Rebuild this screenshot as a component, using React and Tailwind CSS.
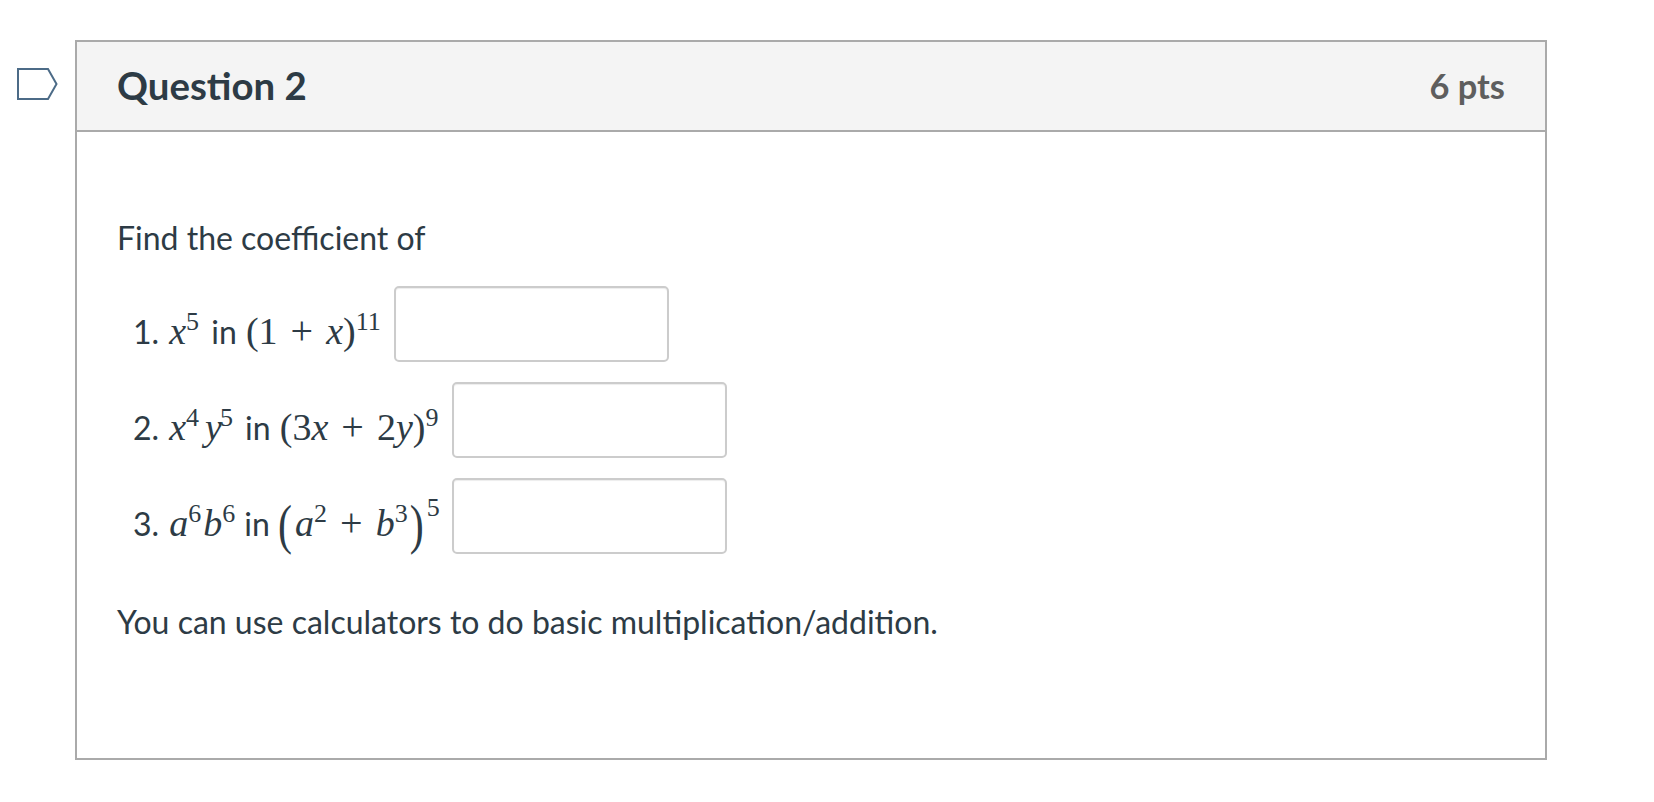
import React from 'react';

const Mi = ({ className = '', children }) => <i className={`font-['Liberation_Serif',serif] text-[38px] ${className}`}>{children}</i>;
const Mn = ({ children }) => <span className="font-['Liberation_Serif',serif] text-[38px]">{children}</span>;
const Plus = () => <span className="font-['Liberation_Serif',serif] text-[40px] leading-none mx-[13px]">+</span>;
const Sup = ({ className = '', children }) => (
    <sup className={`font-['Liberation_Serif',serif] text-[26px] leading-none align-[14px] top-0 ${className}`}>{children}</sup>
);
const Paren = ({ className = '', children }) => (
    <span className={`inline-block font-['Liberation_Serif',serif] text-[42px] leading-none align-[-3px] scale-y-[1.3] ${className}`}>{children}</span>
);

const AnswerBox = () => (
    <input
        type="text"
        className="w-[275px] h-[76px] ml-[14px] rounded-[5px] border-2 border-[#cccccc] bg-white shadow-[inset_0_1px_1px_rgba(0,0,0,0.075)]"
    />
);

const Row = ({ num, textClass = 'pt-[12px]', children }) => (
    <li className="flex items-center h-[76px] mb-[20px]">
        <span className={`ml-[16px] whitespace-nowrap ${textClass}`}>
            <span className="mr-[10px]">{num}</span>
            {children}
        </span>
        <AnswerBox />
    </li>
);

export default function App() {
    return (
        <div className="min-h-[802px] bg-white font-['Lato',sans-serif] text-[#2d3b45] flex items-start pt-[40px] pl-[17px]">
            {/* Flag marker */}
            <svg width="41" height="32" viewBox="0 0 41 32" className="mt-[28px] mr-[17px] shrink-0">
                <path d="M1 1 H31 L39.5 16 L31 31 H1 Z" fill="#ffffff" stroke="#4c6b87" strokeWidth="2" />
            </svg>

            <div className="w-[1472px] h-[720px] border-2 border-[#aaaaaa]">
                <div className="h-[90px] bg-[#f4f4f4] border-b-2 border-[#aaaaaa] flex items-center justify-between pl-[40px] pr-[40px]">
                    <h2 className="text-[38.4px] font-bold leading-none -translate-y-[1px]">Question 2</h2>
                    <div className="text-[34.4px] font-bold leading-none text-[#5e5e5e]">6 pts</div>
                </div>

                <div className="pl-[40px] pt-[86px] text-[32px] leading-[40px]">
                    <p>Find the coefficient of</p>
                    <ol className="mt-[28px]">
                        <Row num="1.">
                            <Mi>x</Mi><Sup>5</Sup> <span className="ml-[4px] mr-[1px]">in</span> <Mn>(1</Mn><Plus /><Mi>x</Mi><Mn>)</Mn><Sup className="-mr-[1px]">11</Sup>
                        </Row>
                        <Row num="2.">
                            <Mi>x</Mi><Sup>4</Sup><Mi className="ml-[6px]">y</Mi><Sup className="-ml-[2px]">5</Sup> <span className="ml-[4px] mr-[1px]">in</span> <Mn>(3</Mn><Mi>x</Mi><Plus /><Mn>2</Mn><Mi>y</Mi><Mn>)</Mn><Sup>9</Sup>
                        </Row>
                        <Row num="3." textClass="pt-[8px]">
                            <Mi>a</Mi><Sup>6</Sup><Mi className="ml-[2px]">b</Mi><Sup>6</Sup> <span className="ml-[1px]">in</span>{' '}
                            <Paren className="mr-[3px]">(</Paren>
                            <Mi>a</Mi><Sup>2</Sup><Plus /><Mi>b</Mi><Sup>3</Sup>
                            <Paren className="ml-[2px]">)</Paren>
                            <Sup className="align-[20px] ml-[3px] -mr-[2px]">5</Sup>
                        </Row>
                    </ol>
                    <p className="mt-[48px]">You can use calculators to do basic multiplication/addition.</p>
                </div>
            </div>
        </div>
    );
}
